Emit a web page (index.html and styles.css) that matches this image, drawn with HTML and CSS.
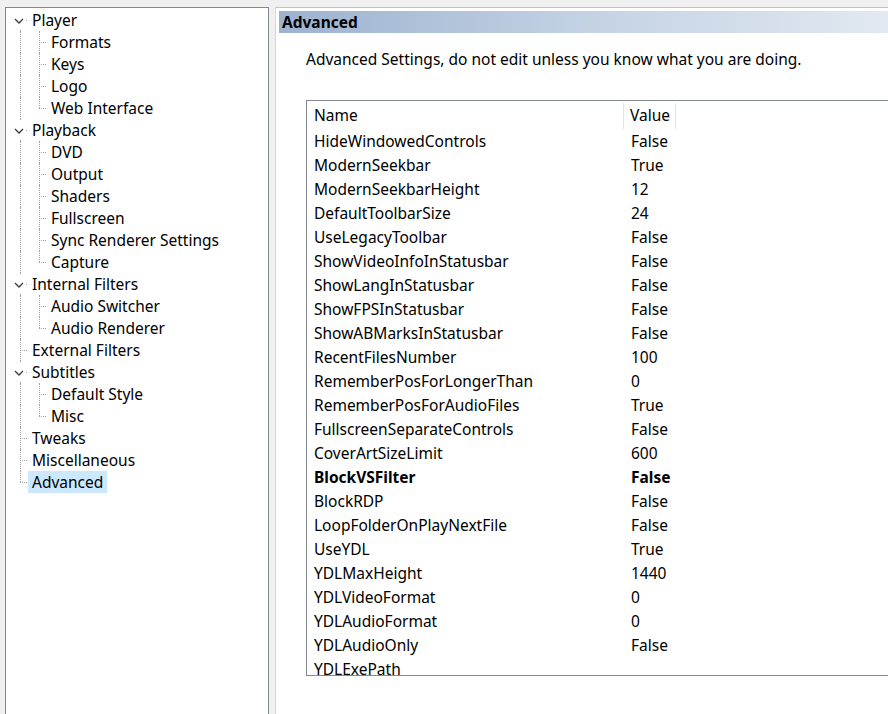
FILE: index.html
```html
<!DOCTYPE html>
<html lang="en">
<head>
<meta charset="utf-8">
<title>Options - Advanced</title>
<link rel="stylesheet" href="styles.css">
</head>
<body>
<div class="window">
  <nav class="tree">
    <div class="row"><span class="cell exp first"><svg class="twisty" width="19" height="22" viewBox="0 0 19 22"><rect x="5" y="1" width="12" height="19" fill="#fff"/><polyline points="7,10 11,14 15,10" fill="none" stroke="#3a3a3a" stroke-width="1.3"/></svg></span><span class="label">Player</span></div>
    <div class="row"><span class="cell pipe"></span><span class="cell tee"></span><span class="label">Formats</span></div>
    <div class="row"><span class="cell pipe"></span><span class="cell tee"></span><span class="label">Keys</span></div>
    <div class="row"><span class="cell pipe"></span><span class="cell tee"></span><span class="label">Logo</span></div>
    <div class="row"><span class="cell pipe"></span><span class="cell elbow"></span><span class="label">Web Interface</span></div>
    <div class="row"><span class="cell exp"><svg class="twisty" width="19" height="22" viewBox="0 0 19 22"><rect x="5" y="1" width="12" height="19" fill="#fff"/><polyline points="7,10 11,14 15,10" fill="none" stroke="#3a3a3a" stroke-width="1.3"/></svg></span><span class="label">Playback</span></div>
    <div class="row"><span class="cell pipe"></span><span class="cell tee"></span><span class="label">DVD</span></div>
    <div class="row"><span class="cell pipe"></span><span class="cell tee"></span><span class="label">Output</span></div>
    <div class="row"><span class="cell pipe"></span><span class="cell tee"></span><span class="label">Shaders</span></div>
    <div class="row"><span class="cell pipe"></span><span class="cell tee"></span><span class="label">Fullscreen</span></div>
    <div class="row"><span class="cell pipe"></span><span class="cell tee"></span><span class="label">Sync Renderer Settings</span></div>
    <div class="row"><span class="cell pipe"></span><span class="cell elbow"></span><span class="label">Capture</span></div>
    <div class="row"><span class="cell exp"><svg class="twisty" width="19" height="22" viewBox="0 0 19 22"><rect x="5" y="1" width="12" height="19" fill="#fff"/><polyline points="7,10 11,14 15,10" fill="none" stroke="#3a3a3a" stroke-width="1.3"/></svg></span><span class="label">Internal Filters</span></div>
    <div class="row"><span class="cell pipe"></span><span class="cell tee"></span><span class="label">Audio Switcher</span></div>
    <div class="row"><span class="cell pipe"></span><span class="cell elbow"></span><span class="label">Audio Renderer</span></div>
    <div class="row"><span class="cell tee"></span><span class="label">External Filters</span></div>
    <div class="row"><span class="cell exp"><svg class="twisty" width="19" height="22" viewBox="0 0 19 22"><rect x="5" y="1" width="12" height="19" fill="#fff"/><polyline points="7,10 11,14 15,10" fill="none" stroke="#3a3a3a" stroke-width="1.3"/></svg></span><span class="label">Subtitles</span></div>
    <div class="row"><span class="cell pipe"></span><span class="cell tee"></span><span class="label">Default Style</span></div>
    <div class="row"><span class="cell pipe"></span><span class="cell elbow"></span><span class="label">Misc</span></div>
    <div class="row"><span class="cell tee"></span><span class="label">Tweaks</span></div>
    <div class="row"><span class="cell tee"></span><span class="label">Miscellaneous</span></div>
    <div class="row"><span class="cell elbow"></span><span class="label selected">Advanced</span></div>
  </nav>

  <main class="page">
    <div class="page-title">Advanced</div>
    <p class="desc">Advanced Settings, do not edit unless you know what you are doing.</p>
    <div class="list">
      <div class="list-head">
        <div class="col-name">Name</div>
        <div class="col-value">Value</div>
      </div>
      <div class="list-body">
        <div class="item"><span class="n">HideWindowedControls</span><span class="v">False</span></div>
        <div class="item"><span class="n">ModernSeekbar</span><span class="v">True</span></div>
        <div class="item"><span class="n">ModernSeekbarHeight</span><span class="v">12</span></div>
        <div class="item"><span class="n">DefaultToolbarSize</span><span class="v">24</span></div>
        <div class="item"><span class="n">UseLegacyToolbar</span><span class="v">False</span></div>
        <div class="item"><span class="n">ShowVideoInfoInStatusbar</span><span class="v">False</span></div>
        <div class="item"><span class="n">ShowLangInStatusbar</span><span class="v">False</span></div>
        <div class="item"><span class="n">ShowFPSInStatusbar</span><span class="v">False</span></div>
        <div class="item"><span class="n">ShowABMarksInStatusbar</span><span class="v">False</span></div>
        <div class="item"><span class="n">RecentFilesNumber</span><span class="v">100</span></div>
        <div class="item"><span class="n">RememberPosForLongerThan</span><span class="v">0</span></div>
        <div class="item"><span class="n">RememberPosForAudioFiles</span><span class="v">True</span></div>
        <div class="item"><span class="n">FullscreenSeparateControls</span><span class="v">False</span></div>
        <div class="item"><span class="n">CoverArtSizeLimit</span><span class="v">600</span></div>
        <div class="item modified"><span class="n">BlockVSFilter</span><span class="v">False</span></div>
        <div class="item"><span class="n">BlockRDP</span><span class="v">False</span></div>
        <div class="item"><span class="n">LoopFolderOnPlayNextFile</span><span class="v">False</span></div>
        <div class="item"><span class="n">UseYDL</span><span class="v">True</span></div>
        <div class="item"><span class="n">YDLMaxHeight</span><span class="v">1440</span></div>
        <div class="item"><span class="n">YDLVideoFormat</span><span class="v">0</span></div>
        <div class="item"><span class="n">YDLAudioFormat</span><span class="v">0</span></div>
        <div class="item"><span class="n">YDLAudioOnly</span><span class="v">False</span></div>
        <div class="item"><span class="n">YDLExePath</span><span class="v"></span></div>
      </div>
    </div>
  </main>
</div>
</body>
</html>
```

FILE: styles.css
```css
html, body {
  margin: 0;
  padding: 0;
  background: #f0f0f0;
}

body {
  font-family: "Noto Sans", "Open Sans", sans-serif;
  font-size: 15.5px;
  color: #000;
}

.window {
  width: 888px;
  height: 714px;
  overflow: hidden;
  display: flex;
  align-items: flex-start;
  gap: 6px;
  padding: 7px 0 0 5px;
  box-sizing: border-box;
}

/* ---------- tree ---------- */
.tree {
  flex: none;
  width: 264px;
  height: 720px;
  box-sizing: border-box;
  border: 1px solid #828790;
  background: #fff;
  padding: 1px 0 0 2px;
}

.row {
  display: flex;
  height: 22px;
  align-items: stretch;
}

.cell {
  flex: none;
  width: 19px;
  height: 22px;
  display: grid;
  grid-template-columns: 12px 7px;
  grid-template-rows: 11px 11px;
}

.cell::before {
  content: "";
  grid-column: 2;
  grid-row: 1 / 3;
  border-left: 1px dotted #a0a0a0;
}

.cell::after {
  content: "";
  grid-column: 2;
  grid-row: 2;
  border-top: 1px dotted #a0a0a0;
}

.pipe::after {
  display: none;
}

.elbow::before {
  grid-row: 1;
}

.first::before {
  grid-row: 2;
}

.twisty {
  grid-area: 1 / 1 / 3 / 3;
  z-index: 1;
  display: block;
}

.label {
  height: 22px;
  line-height: 22px;
  padding: 0 4px 0 4px;
  margin-left: 1px;
  white-space: nowrap;
}

.label.selected {
  background: #cce8ff;
}

/* ---------- page ---------- */
.page {
  flex: none;
  width: 660px;
  height: 720px;
  box-sizing: border-box;
  border: 1px solid #d6d6d6;
  border-top-color: #c4c4c4;
  background: #fff;
  padding: 3px 0 0 3px;
}

.page-title {
  height: 22px;
  line-height: 22px;
  padding-left: 3px;
  font-weight: bold;
  background: linear-gradient(to right, #9cb2cf 0%, #c2d1e3 45%, #e6ecf3 100%);
}

.desc {
  margin: 16px 0 0 27px;
  height: 20px;
  line-height: 20px;
}

.list {
  margin: 31px 0 0 27px;
  width: 620px;
  height: 576px;
  box-sizing: border-box;
  border: 1px solid #828790;
  overflow: hidden;
}

.list-head {
  display: flex;
  height: 28px;
  align-items: flex-end;
}

.list-head > div {
  height: 26px;
  line-height: 24px;
  box-sizing: border-box;
  border-right: 1px solid #e5e5e5;
}

.col-name {
  width: 317px;
  padding-left: 7px;
}

.col-value {
  width: 52px;
  padding-left: 6px;
}

.item {
  display: flex;
  height: 24px;
  line-height: 24px;
  white-space: nowrap;
}

.item .n {
  width: 317px;
  padding-left: 7px;
  box-sizing: border-box;
}

.item .v {
  padding-left: 7px;
}

.item.modified {
  font-weight: bold;
}
```
